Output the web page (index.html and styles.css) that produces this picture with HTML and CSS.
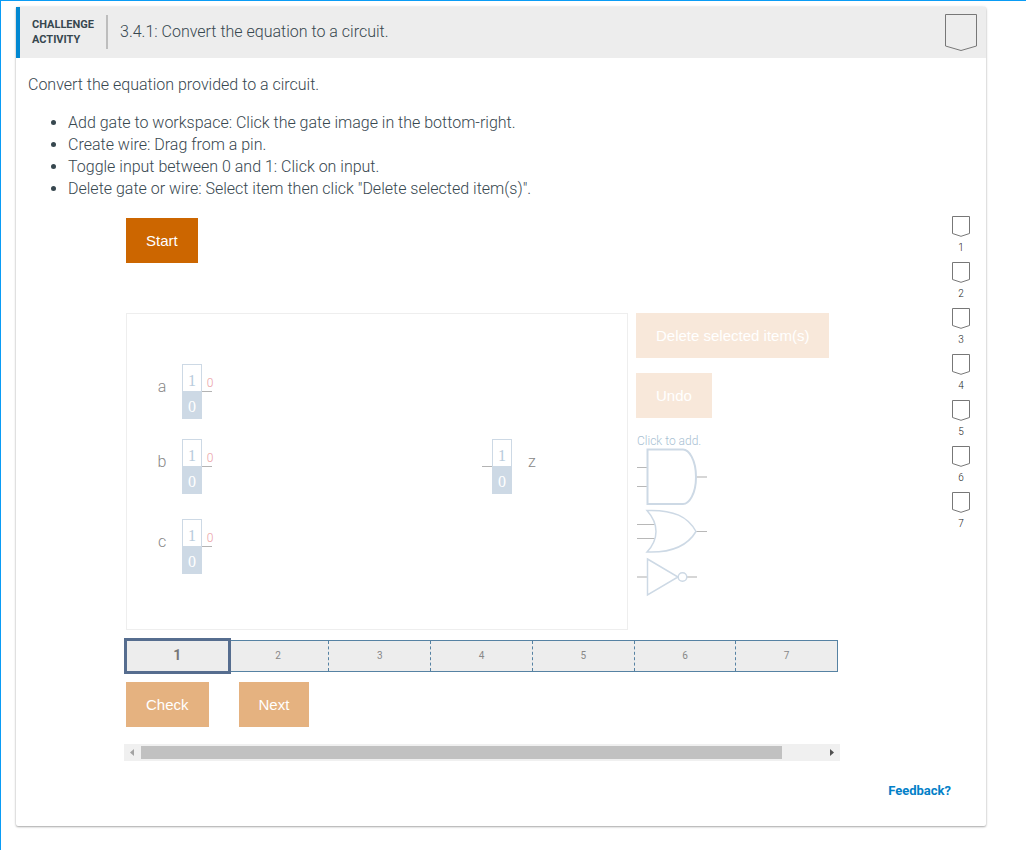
FILE: index.html
```html
<!DOCTYPE html>
<html lang="en">
<head>
<meta charset="utf-8">
<title>3.4.1: Convert the equation to a circuit.</title>
<link rel="stylesheet" href="styles.css">
</head>
<body>
<svg class="defs" width="0" height="0" aria-hidden="true">
  <symbol id="badge" viewBox="0 0 18 21"><path d="M.5 .5H17.5V17.500L9 20.300L.5 17.500Z"/></symbol>
</svg>
<main class="card">
  <header class="card-header">
    <div class="kind">Challenge<br>activity</div>
    <h1 class="title">3.4.1: Convert the equation to a circuit.</h1>
    <svg class="big-badge" viewBox="0 0 32 38" aria-hidden="true"><path d="M.5 1.500H31.500V33L16 37.500L.5 33Z"/></svg>
  </header>
  <section class="intro">
    <p>Convert the equation provided to a circuit.</p>
    <ul>
      <li>Add gate to workspace: Click the gate image in the bottom-right.</li>
      <li>Create wire: Drag from a pin.</li>
      <li>Toggle input between 0 and 1: Click on input.</li>
      <li>Delete gate or wire: Select item then click "Delete selected item(s)".</li>
    </ul>
  </section>
  <div class="activity">
    <div class="tool-area">
      <div class="tool">
        <div class="inset"><button class="btn" type="button">Start</button></div>
        <div class="editor inset">
          <svg class="workspace" viewBox="0 0 500 315" role="img" aria-label="Circuit workspace">
            <defs>
              <g id="switch">
                <rect class="sw-top" x=".5" y=".5" width="19" height="27"/>
                <rect class="sw-bottom" x="0" y="27" width="20" height="28"/>
              </g>
            </defs>
            <g transform="translate(55 50)"><use href="#switch"/><path class="pin" d="M20 27.500H30"/><text class="one" x="10" y="22">1</text><text class="zero" x="10" y="48">0</text><text class="value" x="28" y="23">0</text><text class="name" x="-20" y="28">a</text></g>
            <g transform="translate(55 125)"><use href="#switch"/><path class="pin" d="M20 27.500H30"/><text class="one" x="10" y="22">1</text><text class="zero" x="10" y="48">0</text><text class="value" x="28" y="23">0</text><text class="name" x="-20" y="28">b</text></g>
            <g transform="translate(55 205)"><use href="#switch"/><path class="pin" d="M20 27.500H30"/><text class="one" x="10" y="22">1</text><text class="zero" x="10" y="48">0</text><text class="value" x="28" y="23">0</text><text class="name" x="-20" y="28">c</text></g>
            <g transform="translate(365 125)"><use href="#switch"/><path class="pin" d="M-10 27.500H0"/><text class="one" x="10" y="22">1</text><text class="zero" x="10" y="48">0</text><text class="name" x="40" y="28">z</text></g>
          </svg>
          <div class="side">
            <button class="btn faint" type="button" disabled>Delete selected item(s)</button>
            <button class="btn faint" type="button" disabled>Undo</button>
            <div class="palette">
              <span class="hint">Click to add.</span>
              <button class="gate" type="button" aria-label="AND gate" disabled>
                <svg width="72" height="58" viewBox="0 0 72 58"><path class="lead" d="M1 19.500H11M1 38.500H11"/><path class="lead soft" d="M60 29H71"/><path class="shape" d="M11.500 1.500H47C53 1.500 60 12 60 29S53 56 47 56H11.500Z"/></svg>
              </button>
              <button class="gate" type="button" aria-label="OR gate" disabled>
                <svg width="72" height="46" viewBox="0 0 72 46"><path class="lead" d="M1 16.500H19M1 30.500H19M60 23.500H71"/><path class="shape thin" d="M11 2.500C38 1.500 52 9 60 23.500C52 37 38 45 11 44C23 31 23 16 11 2.500Z"/></svg>
              </button>
              <button class="gate" type="button" aria-label="NOT gate" disabled>
                <svg width="72" height="42" viewBox="0 0 72 42"><path class="lead soft" d="M1 21H11M51 21H61"/><path class="shape thin" d="M11.500 3L42 21L11.500 39Z"/><circle class="shape thin" cx="46.500" cy="21" r="4.300"/></svg>
              </button>
            </div>
          </div>
        </div>
        <ol class="steps">
          <li class="current">1</li><li>2</li><li>3</li><li>4</li><li>5</li><li>6</li><li>7</li>
        </ol>
        <div class="actions inset">
          <button class="btn muted" type="button" disabled>Check</button>
          <button class="btn muted" type="button" disabled>Next</button>
        </div>
        <div class="scroll" aria-hidden="true">
          <svg width="17" height="17"><path fill="#a3a3a3" d="M10 5V12L6 8.500Z"/></svg>
          <div class="track"><div class="thumb"></div></div>
          <svg width="17" height="17"><path fill="#505050" d="M7 5V12L11 8.500Z"/></svg>
        </div>
      </div>
    </div>
    <ol class="levels">
      <li><svg><use href="#badge"/></svg>1</li>
      <li><svg><use href="#badge"/></svg>2</li>
      <li><svg><use href="#badge"/></svg>3</li>
      <li><svg><use href="#badge"/></svg>4</li>
      <li><svg><use href="#badge"/></svg>5</li>
      <li><svg><use href="#badge"/></svg>6</li>
      <li><svg><use href="#badge"/></svg>7</li>
    </ol>
  </div>
  <footer class="card-footer"><a href="#feedback">Feedback?</a></footer>
</main>
</body>
</html>
```
FILE: styles.css
```css
* { box-sizing: border-box; }
body {
  margin: 0;
  min-height: 100vh;
  padding: 6px 40px 24px 15px;
  border-top: 1px solid #0a9cf5;
  border-left: 1px solid #0a9cf5;
  background: #fff;
  color: #37474f;
  font: 300 16px/22px Roboto, "Liberation Sans", sans-serif;
}
.defs { position: absolute; }
.card {
  border-radius: 2px;
  background: #fff;
  box-shadow: 0 1px 2px rgba(0, 0, 0, .3), 0 0 3px rgba(0, 0, 0, .12);
}
.card-header {
  display: flex;
  align-items: center;
  height: 51px;
  padding: 0 9px 1px 12px;
  border-left: 4px solid #0288d1;
  background: #ededed;
}
.kind {
  padding: 2px 12px 2px 0;
  border-right: 2px solid #bdbdbd;
  font-size: 11px;
  font-weight: 700;
  line-height: 15px;
  text-transform: uppercase;
}
.title {
  flex: 1;
  margin: 0 0 0 12px;
  font-size: 16px;
  font-weight: 300;
}
.big-badge { width: 32px; height: 38px; fill: none; stroke: #777; }
.intro { padding: 16px 12px 0; }
.intro p { margin: 0 0 16px; }
.intro ul { margin: 0; padding-left: 40px; }
.activity { display: flex; padding-left: 12px; }
.tool-area { flex: 1; padding-top: 18px; }
.tool { max-width: 716px; margin: 0 auto; }
.inset { margin: 0 2px; }
.btn {
  height: 45px;
  padding: 0 20px;
  border: 0;
  background: #cc6600;
  color: #fff;
  font: 15px "Liberation Sans", Arial, sans-serif;
}
.btn.muted { background: #e5b280; }
.btn.faint { background: #f8e8da; }
.editor { display: flex; gap: 8px; margin-top: 50px; }
.workspace { flex: 0 1 502px; min-width: 0; border: 1px solid #eee; }
.sw-top { fill: #fff; stroke: #cdd9e5; }
.sw-bottom { fill: #cdd9e5; }
.pin { stroke: #b3b3b3; }
.workspace text { text-anchor: middle; font-size: 16px; }
.one, .zero { font-family: "Liberation Serif", serif; font-weight: 400; }
.one { fill: #b9cbdc; }
.zero { fill: #fff; }
.workspace .value { fill: #eba0a4; font-size: 12px; }
.name { fill: #888; }
.side { display: flex; flex-direction: column; align-items: flex-start; gap: 15px; }
.palette { display: flex; flex-direction: column; align-items: flex-start; padding-top: 1px; }
.hint { padding-left: 1px; color: #a9bfd3; font-size: 12px; line-height: 14px; }
.gate { padding: 0; border: 0; background: none; }
.gate svg { display: block; fill: none; }
.gate + .gate { margin-top: 2px; }
.lead { stroke: #b8b8b8; }
.lead.soft { stroke: #d6d6d6; stroke-width: 2; }
.shape { fill: #fff; stroke: #cdd9e5; stroke-width: 2; }
.shape.thin { stroke-width: 1.500; }
.steps {
  display: flex;
  height: 32px;
  margin: 10px 2px;
  padding: 0;
  border: 1px solid #5682a3;
  background: #ededed;
  list-style: none;
  color: #888;
  font-size: 10px;
  font-weight: 400;
  line-height: 29px;
  text-align: center;
}
.steps li { flex: 1; border-right: 1px dashed #5682a3; }
.steps li:last-child { border-right: 0; }
.steps .current {
  border-right: 0;
  outline: 3px solid #566d8f;
  color: #777;
  font-size: 14px;
  font-weight: 700;
}
.actions { display: flex; gap: 30px; }
.scroll { display: flex; margin-top: 17px; background: #f0f0f0; }
.track { flex: 1; padding: 2px 0; }
.thumb { width: 94%; height: 13px; background: #c1c1c1; }
.levels {
  display: flex;
  flex-direction: column;
  gap: 7px;
  width: 50px;
  margin: 0;
  padding: 16px 0 0;
  list-style: none;
  color: #222;
  font-size: 10px;
  line-height: 15px;
  text-align: center;
}
.levels svg { display: block; width: 18px; height: 21px; margin: 0 auto 3px; fill: none; stroke: #777; }
.card-footer { padding: 19px 35px 24px; text-align: right; font-size: 13px; }
.card-footer a { color: #0280c8; font-weight: 700; text-decoration: none; }
```
